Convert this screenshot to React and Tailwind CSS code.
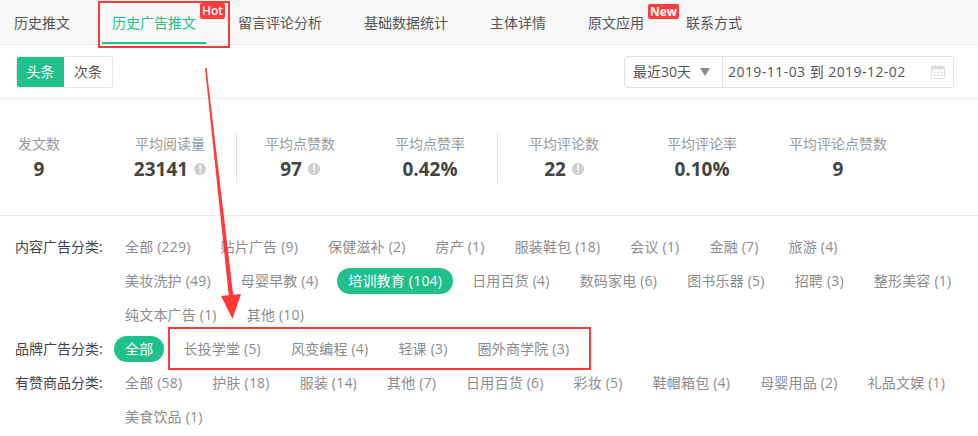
const tabs = [
  { label: '历史推文' },
  { label: '历史广告推文', active: true, badge: 'Hot' },
  { label: '留言评论分析' },
  { label: '基础数据统计' },
  { label: '主体详情' },
  { label: '原文应用', badge: 'New' },
  { label: '联系方式' },
];

const stats = [
  { label: '发文数', value: '9', cls: 'ml-0 w-[78px]' },
  { label: '平均阅读量', value: '23141', info: true, cls: 'ml-[42px] w-[100px]' },
  { divider: true, cls: 'ml-[16px]' },
  { label: '平均点赞数', value: '97', info: true, cls: 'ml-[13px] w-[100px]' },
  { label: '平均点赞率', value: '0.42%', cls: 'ml-[30px] w-[100px]' },
  { divider: true, cls: 'ml-[17px]' },
  { label: '平均评论数', value: '22', info: true, cls: 'ml-[16px] w-[100px]' },
  { label: '平均评论率', value: '0.10%', cls: 'ml-[38px] w-[100px]' },
  { label: '平均评论点赞数', value: '9', cls: 'ml-[26px] w-[120px]' },
];

const groups = [
  {
    label: '内容广告分类:',
    rows: [
      ['全部 (229)', '贴片广告 (9)', '保健滋补 (2)', '房产 (1)', '服装鞋包 (18)', '会议 (1)', '金融 (7)', '旅游 (4)'],
      ['美妆洗护 (49)', '母婴早教 (4)', '*培训教育 (104)', '日用百货 (4)', '数码家电 (6)', '图书乐器 (5)', '招聘 (3)', '整形美容 (1)'],
      ['纯文本广告 (1)', '其他 (10)'],
    ],
  },
  {
    label: '品牌广告分类:',
    rows: [['*全部', '长投学堂 (5)', '风变编程 (4)', '轻课 (3)', '圈外商学院 (3)']],
  },
  {
    label: '有赞商品分类:',
    rows: [
      ['全部 (58)', '护肤 (18)', '服装 (14)', '其他 (7)', '日用百货 (6)', '彩妆 (5)', '鞋帽箱包 (4)', '母婴用品 (2)', '礼品文娱 (1)'],
      ['美食饮品 (1)'],
    ],
  },
];

function InfoDot() {
  return (
    <span className="ml-[6px] inline-flex h-[12px] w-[12px] items-center justify-center rounded-full bg-[#cfcfcf] text-[10px] font-bold leading-none text-white">
      !
    </span>
  );
}

function Tag({ text }) {
  const active = text.startsWith('*');
  const t = active ? text.slice(1) : text;
  return (
    <span
      className={
        active
          ? 'h-[26px] rounded-full bg-[#1fc08b] px-[11px] leading-[26px] tracking-[0.2px] text-white'
          : 'h-[26px] px-[11px] leading-[26px] tracking-[0.2px] text-[#8c8c8c]'
      }
    >
      {t}
    </span>
  );
}

export default function App() {
  return (
    <div className="relative h-[436px] w-full overflow-hidden bg-white font-['Open_Sans','Noto_Sans_CJK_SC',sans-serif] text-[14px] text-[#555]">
      {/* Tabs */}
      <nav className="flex h-[45px] gap-[42px] border-b border-[#ebebeb] bg-[#f8f8f8] pl-[14px]">
        {tabs.map((tab) => (
          <div key={tab.label} className="relative flex h-full items-center">
            <span className={tab.active ? 'text-[#1fc08b]' : 'text-[#555]'}>{tab.label}</span>
            {tab.active && <span className="absolute bottom-0 left-[-10px] right-[-10px] h-[2px] bg-[#1fc08b]" />}
            {tab.badge && (
              <span
                className={
                  tab.badge === 'Hot'
                    ? 'absolute left-[calc(100%+4px)] top-[3px] h-[16px] rounded-[2px] bg-[#ff3b3b] px-[2px] text-[12px] font-semibold leading-[16px] text-white'
                    : 'absolute left-[calc(100%+4px)] top-[4px] h-[15px] rounded-[2px] bg-[#ff3b3b] px-[2px] text-[12px] font-bold leading-[15px] text-white'
                }
              >
                {tab.badge}
              </span>
            )}
          </div>
        ))}
      </nav>

      {/* Toolbar */}
      <div className="flex h-[54px] items-center justify-between border-b border-[#ebebeb] pl-[16px] pr-[24px]">
        <div className="flex h-[32px] overflow-hidden rounded-[3px] border border-[#e6e6e6]">
          <button className="w-[47px] bg-[#1fc08b] text-white">头条</button>
          <button className="w-[48px] bg-white text-[#555]">次条</button>
        </div>
        <div className="flex h-[32px] rounded-[3px] border border-[#e2e2e2]">
          <div className="flex w-[98px] items-center gap-[9px] border-r border-[#e2e2e2] pl-[8px] text-[#555]">
            <span>最近30天</span>
            <svg width="10" height="8" viewBox="0 0 10 8">
              <path d="M0 0 L10 0 L5 8 Z" fill="#8a8a8a" />
            </svg>
          </div>
          <div className="flex w-[230px] items-center justify-between pl-[5px] pr-[8px] text-[#555]">
            <span className="tracking-[0.45px]">2019-11-03 到 2019-12-02</span>
            <svg width="14" height="14" viewBox="0 0 14 14">
              <rect x="0.5" y="1.5" width="13" height="12" rx="1" fill="none" stroke="#dcdcdc" />
              <rect x="0.5" y="1.5" width="13" height="3" fill="#dcdcdc" />
              <rect x="3" y="0" width="1.5" height="3" fill="#dcdcdc" />
              <rect x="9.5" y="0" width="1.5" height="3" fill="#dcdcdc" />
              <g fill="#dcdcdc">
                <rect x="2.5" y="6.5" width="2" height="1.5" />
                <rect x="6" y="6.5" width="2" height="1.5" />
                <rect x="9.5" y="6.5" width="2" height="1.5" />
                <rect x="2.5" y="9.5" width="2" height="1.5" />
                <rect x="6" y="9.5" width="2" height="1.5" />
                <rect x="9.5" y="9.5" width="2" height="1.5" />
              </g>
            </svg>
          </div>
        </div>
      </div>

      {/* Stats */}
      <div className="flex h-[117px] items-start border-b border-[#ebebeb] pt-[35px]">
        {stats.map((s, i) =>
          s.divider ? (
            <div key={i} className={`${s.cls} h-[49px] w-px bg-[#e3e3e3]`} />
          ) : (
            <div key={i} className={`${s.cls} flex flex-col items-center`}>
              <span className="leading-[20px] text-[#999]">{s.label}</span>
              <span className="mt-[2px] flex items-center text-[19px] font-bold leading-[26px] text-[#444]">
                {s.value}
                {s.info && <InfoDot />}
              </span>
            </div>
          )
        )}
      </div>

      {/* Categories */}
      <div className="flex flex-col gap-[8px] pl-[15px] pt-[18px]">
        {groups.map((g) => (
          <div key={g.label} className="flex">
            <span className="w-[99px] shrink-0 leading-[26px] text-[#444]">{g.label}</span>
            <div className="flex flex-col gap-[8px]">
              {g.rows.map((row, ri) => (
                <div key={ri} className="flex gap-[8px] whitespace-nowrap">
                  {row.map((t) => (
                    <Tag key={t} text={t} />
                  ))}
                </div>
              ))}
            </div>
          </div>
        ))}
      </div>

      {/* Annotations */}
      <svg className="pointer-events-none absolute left-0 top-0" width="978" height="436" viewBox="0 0 978 436">
        <rect x="99" y="2" width="130" height="45" fill="none" stroke="#ff3838" strokeWidth="2" />
        <rect x="169" y="328" width="421" height="41" fill="none" stroke="#ff3838" strokeWidth="2" />
        <polygon points="205,68 206.5,68 233.5,298 229,298" fill="#ff3838" />
        <polygon points="221,296 241,294 232.5,319" fill="#ff3838" />
      </svg>
    </div>
  );
}
